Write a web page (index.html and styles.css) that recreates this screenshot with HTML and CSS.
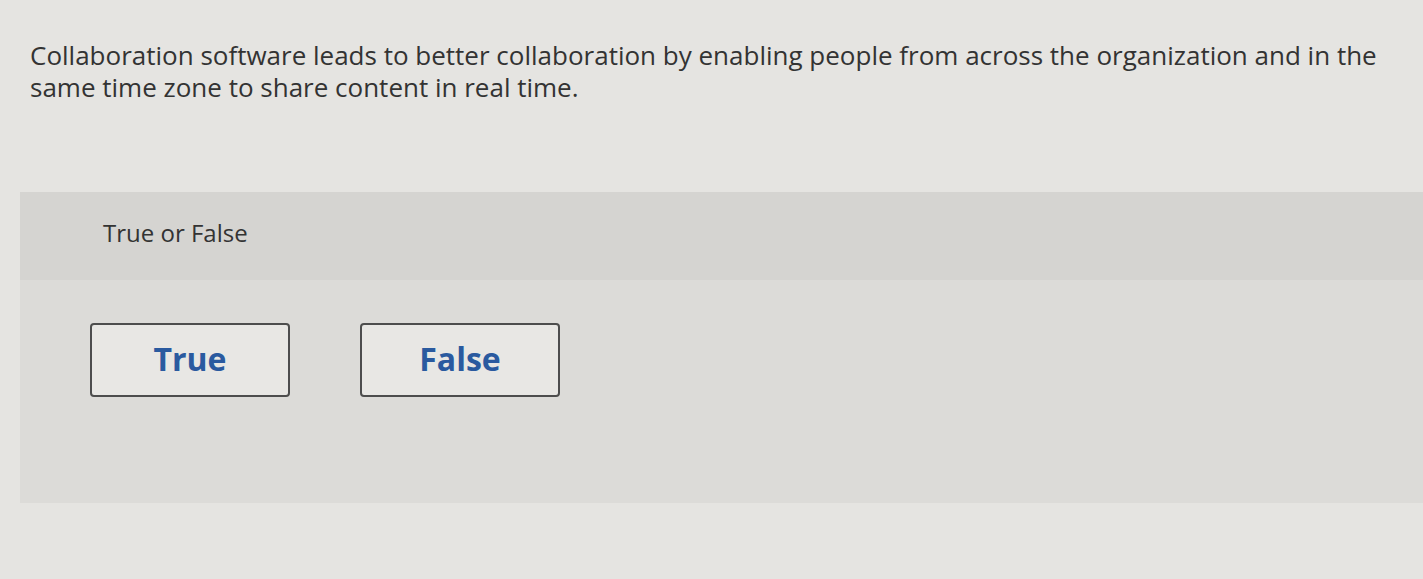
FILE: index.html
```html
<!DOCTYPE html>
<html>

<head>
    <meta http-equiv="Content-Type" content="text/html; charset=utf-8" />
    <title>True or False</title>
    <link rel="stylesheet" href="styles.css">
</head>

<body>

    <div class="question">
        Collaboration software leads to better collaboration by enabling people from across the organization and in the same time zone to share content in real time.
    </div>

    <div class="answer-panel">
        <div class="answer-head">True or False</div>
        <div class="answer-body">
            <a class="answer-btn" href="#">True</a>
            <a class="answer-btn" href="#">False</a>
        </div>
    </div>

</body>

</html>
```

FILE: styles.css
```css
body {
    margin: 0px;
    padding: 0px;
    background: #e5e4e1;
    font-family: "Open Sans", "Liberation Sans", sans-serif;
    color: #333;
}

.question {
    width: 1380px;
    padding: 39px 0px 0px 30px;
    font-size: 26px;
    line-height: 32px;
}

.answer-panel {
    margin: 89px 0px 0px 20px;
    background: #dcdbd8;
}

.answer-head {
    height: 62px;
    padding: 26px 0px 0px 83px;
    line-height: 30px;
    font-size: 24px;
    color: #333;
    background: #d5d4d1;
}

.answer-body {
    display: flex;
    gap: 70px;
    padding: 43px 0px 106px 70px;
}

.answer-btn {
    display: block;
    width: 196px;
    height: 70px;
    line-height: 68px;
    text-align: center;
    border: 2px solid #4d4d4d;
    border-radius: 4px;
    background: #e8e7e4;
    color: #2a5a9f;
    font-size: 32px;
    font-weight: bold;
    text-decoration: none;
}
```
